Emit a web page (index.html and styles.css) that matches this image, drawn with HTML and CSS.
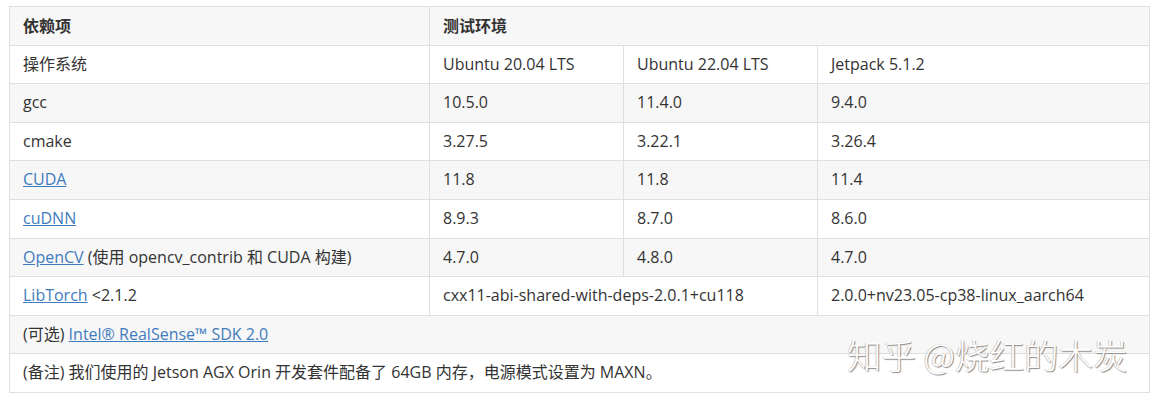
FILE: index.html
```html
<!DOCTYPE html>
<html lang="zh-CN">
<head>
<meta charset="utf-8">
<title>依赖项</title>
<link rel="stylesheet" href="styles.css">
</head>
<body>
<div class="page">
  <table class="deps">
    <colgroup>
      <col class="c1"><col class="c2"><col class="c3"><col class="c4">
    </colgroup>
    <thead>
      <tr><th>依赖项</th><th colspan="3">测试环境</th></tr>
    </thead>
    <tbody>
      <tr><td>操作系统</td><td>Ubuntu 20.04 LTS</td><td>Ubuntu 22.04 LTS</td><td>Jetpack 5.1.2</td></tr>
      <tr><td>gcc</td><td>10.5.0</td><td>11.4.0</td><td>9.4.0</td></tr>
      <tr><td>cmake</td><td>3.27.5</td><td>3.22.1</td><td>3.26.4</td></tr>
      <tr><td><a href="#">CUDA</a></td><td>11.8</td><td>11.8</td><td>11.4</td></tr>
      <tr><td><a href="#">cuDNN</a></td><td>8.9.3</td><td>8.7.0</td><td>8.6.0</td></tr>
      <tr><td><a href="#">OpenCV</a> (使用 opencv_contrib 和 CUDA 构建)</td><td>4.7.0</td><td>4.8.0</td><td>4.7.0</td></tr>
      <tr><td><a href="#">LibTorch</a> &lt;2.1.2</td><td colspan="2">cxx11-abi-shared-with-deps-2.0.1+cu118</td><td>2.0.0+nv23.05-cp38-linux_aarch64</td></tr>
      <tr><td colspan="4">(可选) <a href="#">Intel® RealSense™ SDK 2.0</a></td></tr>
      <tr><td colspan="4">(备注) 我们使用的 Jetson AGX Orin 开发套件配备了 64GB 内存，电源模式设置为 MAXN。</td></tr>
    </tbody>
  </table>
  <div class="watermark">知乎 @烧红的木炭</div>
</div>
</body>
</html>
```
FILE: styles.css
```css
html, body {
  margin: 0;
  padding: 0;
  background: #fff;
}
.page {
  position: relative;
  padding: 6px 9px;
  font-family: "Open Sans", "Noto Sans CJK SC", sans-serif;
  font-size: 16px;
  color: #333;
}
.deps {
  width: 1140px;
  table-layout: fixed;
  border-collapse: collapse;
}
.c1 { width: 420px; }
.c2 { width: 194px; }
.c3 { width: 194px; }
.c4 { width: 332px; }
.deps th,
.deps td {
  border: 1px solid #dfdfdf;
  padding: 8px 13px;
  line-height: 21.6px;
  text-align: left;
  white-space: nowrap;
  vertical-align: middle;
}
.deps th {
  font-weight: 700;
  font-family: "Noto Sans CJK SC", sans-serif;
  background: #f7f7f7;
}
.deps tbody tr:nth-child(even) td {
  background: #f7f7f7;
}
.deps a {
  color: #3f7cbd;
  text-decoration: underline;
}
.watermark {
  position: absolute;
  left: 847px;
  top: 329px;
  font-family: "Noto Sans CJK SC", sans-serif;
  font-size: 34.5px;
  font-weight: 300;
  line-height: 50px;
  color: #fff;
  text-shadow: 1px 1px 1px #8a8a8a, -1px 0 0 #cfcfcf;
  pointer-events: none;
}
```
